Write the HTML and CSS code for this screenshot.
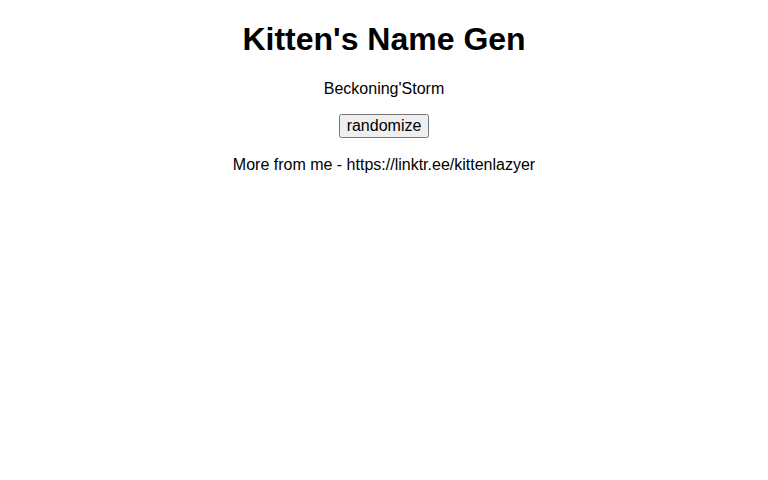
FILE: index.html
```html
<!DOCTYPE html>
<html lang="en">

<head>
    <meta charset="UTF-8">
    <meta name="viewport" content="width=device-width, initial-scale=1.0">
    <title>Kitten's Name Gen</title>
    <link rel="stylesheet" href="styles.css">
</head>

<body>
    <h1>Kitten's Name Gen</h1>
    <p id="name">Beckoning'Storm</p>
    <p><button id="btn">randomize</button></p>
    <p class="more">More from me - https://linktr.ee/kittenlazyer</p>
    <script>
        var first = ['Beckoning', 'Sleepy', 'Little', 'Fluffy', 'Shadow', 'Misty', 'Tiny'];
        var last = ['Storm', 'Paw', 'Whisker', 'Moon', 'Bean', 'Tail', 'Fern'];

        var oName = document.getElementById('name');
        var oBtn = document.getElementById('btn');

        oBtn.onclick = function () {
            var a = first[Math.floor(Math.random() * first.length)];
            var b = last[Math.floor(Math.random() * last.length)];
            oName.innerHTML = a + "'" + b;
        }
    </script>
</body>

</html>
```
FILE: styles.css
```css
body {
    margin: 0;
    font-family: "Liberation Sans", Arial, sans-serif;
    text-align: center;
    color: #000;
    background: #fff;
}

h1 {
    font-size: 32px;
}

button {
    font-family: inherit;
    font-size: 16px;
}

.more {
    margin-top: 18px;
}
```
